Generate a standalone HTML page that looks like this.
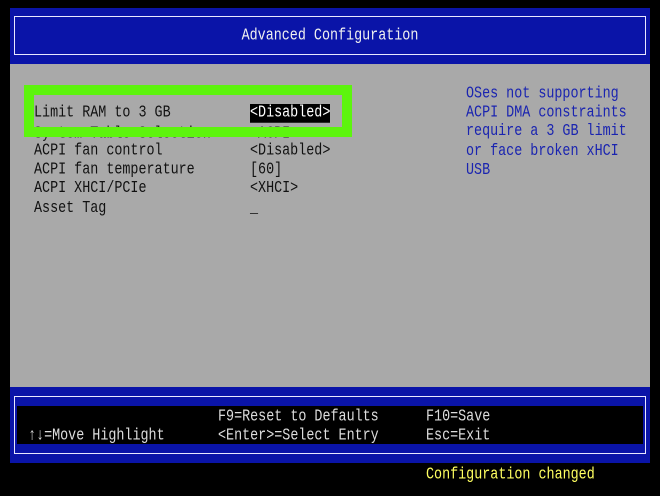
<!DOCTYPE html>
<html><head><style>
body{margin:0;width:660px;height:496px;background:#000;position:relative;overflow:hidden;font-family:"Liberation Mono",monospace;font-size:13.4px}
.t{position:absolute;white-space:pre;line-height:15.2px;transform:scaleY(1.25);transform-origin:0 0}
</style></head><body>
<div style="position:absolute;left:10px;top:8px;width:640px;height:56px;background:#0a14a8"></div>
<div style="position:absolute;left:14px;top:16px;width:630px;height:37px;border:1px solid #e8e8ff"></div>
<div class="t" style="left:0;width:660px;text-align:center;top:27px;color:#f0f0f0">Advanced Configuration</div>
<div style="position:absolute;left:10px;top:64px;width:640px;height:323px;background:#a9a9a9"></div>
<div class="t" style="left:34px;top:125px;color:#222">Sy tem Table Selection</div>
<div class="t" style="left:250px;top:125px;color:#222">&lt;ACPI&gt;</div>
<div style="position:absolute;left:24px;top:85px;width:308px;height:32px;border:10px solid #5df40e"></div>
<div class="t" style="left:34px;top:104px;color:#111">Limit RAM to 3 GB</div>
<div class="t" style="left:250px;top:104px;color:#fff;background:#000">&lt;Disabled&gt;</div>
<div class="t" style="left:34px;top:142px;color:#111">ACPI fan control
ACPI fan temperature
ACPI XHCI/PCIe
Asset Tag</div>
<div class="t" style="left:250px;top:142px;color:#111">&lt;Disabled&gt;
[60]
&lt;XHCI&gt;
_</div>
<div class="t" style="left:466px;top:85px;color:#1a24b0">OSes not supporting
ACPI DMA constraints
require a 3 GB limit
or face broken xHCI
USB</div>
<div style="position:absolute;left:10px;top:387px;width:640px;height:76px;background:#0a14a8"></div>
<div style="position:absolute;left:14px;top:396px;width:630px;height:56px;border:1px solid #e8e8ff"></div>
<div style="position:absolute;left:17px;top:406px;width:626px;height:38px;background:#000"></div>
<div class="t" style="left:218px;top:408px;color:#ddd">F9=Reset to Defaults</div>
<div class="t" style="left:426px;top:408px;color:#ddd">F10=Save</div>
<div class="t" style="left:28px;top:427px;color:#ddd">↑↓=Move Highlight</div>
<div class="t" style="left:218px;top:427px;color:#ddd">&lt;Enter&gt;=Select Entry</div>
<div class="t" style="left:426px;top:427px;color:#ddd">Esc=Exit</div>
<div class="t" style="left:426px;top:466px;color:#ffff60">Configuration changed</div>
</body></html>
